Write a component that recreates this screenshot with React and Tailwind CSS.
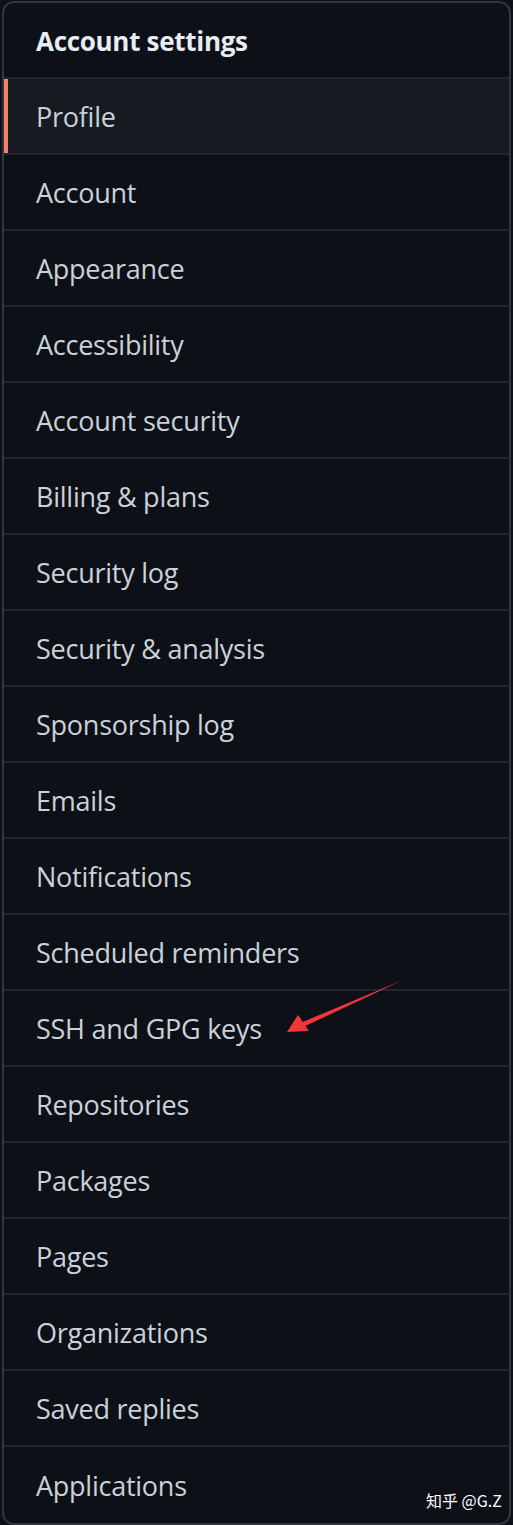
import React from 'react';

const ITEMS = [
    'Profile',
    'Account',
    'Appearance',
    'Accessibility',
    'Account security',
    'Billing & plans',
    'Security log',
    'Security & analysis',
    'Sponsorship log',
    'Emails',
    'Notifications',
    'Scheduled reminders',
    'SSH and GPG keys',
    'Repositories',
    'Packages',
    'Pages',
    'Organizations',
    'Saved replies',
    'Applications',
];

const FONT = "font-['Open_Sans','Noto_Sans',sans-serif]";

export default function App() {
    return (
        <div className={`relative w-[513px] h-[1525px] bg-[#0d1117] pt-px pl-[2px] pr-[2px] ${FONT}`}>
            <nav className="rounded-[12px] border-2 border-[#30363d] overflow-hidden bg-[#0d1117]">
                <div className="h-[76px] flex items-center pl-[32px] pt-[2px] border-b-2 border-[#21262d]">
                    <h3 className="text-[26px] font-bold text-[#e6edf3] tracking-[-0.3px]">Account settings</h3>
                </div>
                {ITEMS.map((item, i) => {
                    const active = i === 0;
                    return (
                        <div
                            key={item}
                            className={`relative h-[76px] flex items-center pl-[32px] pt-[2px] ${i < ITEMS.length - 1 ? 'border-b-2 border-[#21262d]' : ''} ${active ? 'bg-[#161b22]' : ''}`}
                        >
                            {active && <span className="absolute left-0 top-0 bottom-0 w-[4px] bg-[#f78166]" />}
                            <span className="text-[27px] text-[#c9d1d9] tracking-[-0.25px]">{item}</span>
                        </div>
                    );
                })}
            </nav>

            {/* annotation arrow */}
            <svg className="absolute left-[280px] top-[975px]" width="130" height="65" viewBox="0 0 130 65">
                <polygon points="123,5 23.2,52 20.8,47.8" fill="#f2353a" />
                <polygon points="7,57 18,40 29,56" fill="#f2353a" />
            </svg>

            <div className="absolute left-[426px] top-[1488px] text-[16px] text-white font-['Noto_Sans_CJK_SC',sans-serif]">
                知乎 @G.Z
            </div>
        </div>
    );
}
